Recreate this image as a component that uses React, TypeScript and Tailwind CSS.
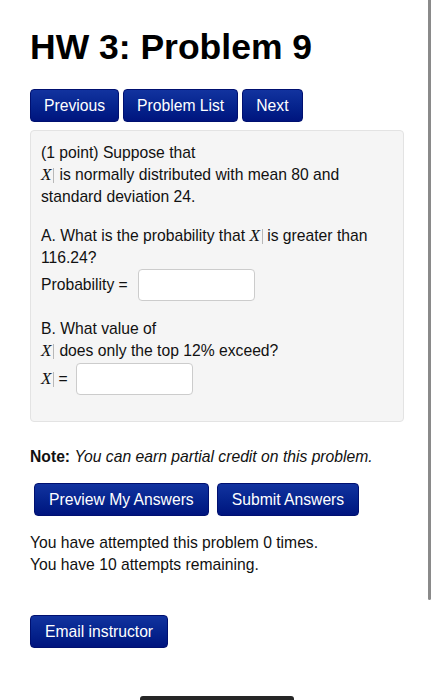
import React from "react";

const font = { fontFamily: '"Liberation Sans", Arial, Helvetica, sans-serif' };

function Btn({ children, tight = false }: { children: React.ReactNode; tight?: boolean }) {
  return (
    <button
      className={
        (tight ? "px-[13px] " : "px-[14px] ") +
        "h-[33px] rounded-[4px] border border-[#001070] bg-linear-to-b from-[#12339f] to-[#00147e] text-white text-[15.7px] leading-[21px] whitespace-nowrap"
      }
    >
      {children}
    </button>
  );
}

function MathX() {
  return (
    <span className="inline-flex items-center">
      <span className="italic text-[17px] leading-[22px]" style={{ fontFamily: '"Liberation Serif", "Times New Roman", serif' }}>X</span>
      <span className="block w-px h-[15px] bg-[#b8b8b8] ml-[2px]" />
    </span>
  );
}

function Input() {
  return <div className="block h-[32px] w-[117px] bg-white border border-[#cccccc] rounded-[4px]" />;
}

export default function App() {
  return (
    <div className="relative h-[700px] w-[435px] overflow-hidden bg-white text-[#111111]" style={font}>
      <div className="pl-[30px] pt-[27px]">
        <h1 className="text-[35.5px] leading-[40px] font-bold text-black">HW 3: Problem 9</h1>
        <div className="mt-[22px] flex gap-[4px]">
          <Btn tight>Previous</Btn>
          <Btn tight>Problem List</Btn>
          <Btn tight>Next</Btn>
        </div>
        <div className="mt-[8px] w-[374px] bg-[#f5f5f5] border border-[#e3e3e3] rounded-[4px] pl-[10px] pt-[11px] pb-[26px] text-[15.7px] leading-[22px]">
          <div>(1 point) Suppose that</div>
          <div className="flex items-center h-[22px] gap-[5px]"><MathX /><span>is normally distributed with mean 80 and</span></div>
          <div>standard deviation 24.</div>
          <div className="mt-[17px] flex items-center h-[22px]">
            <span>A. What is the probability that&nbsp;</span><MathX /><span>&nbsp;is greater than</span>
          </div>
          <div>116.24?</div>
          <div className="flex items-center h-[32px]">
            <span>Probability =</span>
            <div className="ml-[10px]"><Input /></div>
          </div>
          <div className="mt-[17px]">B. What value of</div>
          <div className="flex items-center h-[22px] gap-[5px]"><MathX /><span>does only the top 12% exceed?</span></div>
          <div className="flex items-center h-[32px] mt-[1px]">
            <MathX />
            <span className="ml-[4px]">=</span>
            <div className="ml-[8px]"><Input /></div>
          </div>
        </div>
        <div className="mt-[24px] text-[15.7px] leading-[22px]">
          <span className="font-bold">Note:</span> <span className="italic">You can earn partial credit on this problem.</span>
        </div>
        <div className="mt-[15px] flex gap-[8px] pl-[4px]">
          <Btn>Preview My Answers</Btn>
          <Btn>Submit Answers</Btn>
        </div>
        <div className="mt-[16px] text-[15.7px] leading-[22px]">
          <div>You have attempted this problem 0 times.</div>
          <div>You have 10 attempts remaining.</div>
        </div>
        <div className="mt-[39px]">
          <Btn>Email instructor</Btn>
        </div>
      </div>
      <div className="absolute left-[428px] top-0 w-[3px] h-[600px] bg-[#8a8a8a] rounded-b-[2px]" />
      <div className="absolute left-[140px] top-[696px] w-[154px] h-[6px] bg-[#262626] rounded-full" />
    </div>
  );
}
